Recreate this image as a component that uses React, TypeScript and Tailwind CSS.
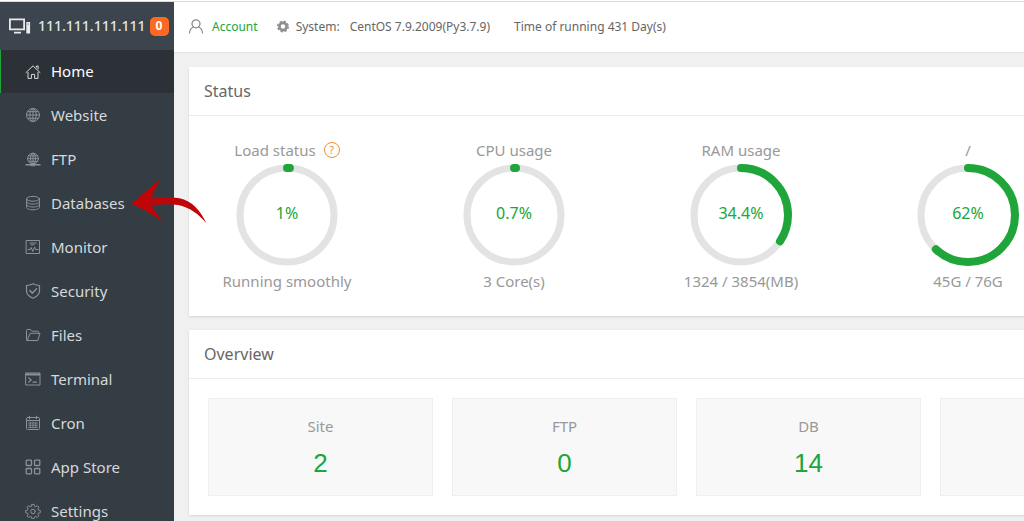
import type { ReactNode } from "react";

type NavItem = { label: string; icon: ReactNode; active?: boolean };

function Glyph({ children }: { children: ReactNode }) {
  return (
    <svg
      viewBox="0 0 16 16"
      className="size-4 shrink-0"
      fill="none"
      stroke="currentColor"
      strokeWidth="1"
      strokeLinecap="round"
      strokeLinejoin="round"
      aria-hidden="true"
    >
      {children}
    </svg>
  );
}

const navItems: NavItem[] = [
  {
    label: "Home",
    active: true,
    icon: (
      <Glyph>
        <path d="M1 8.6 8 1.8l7 6.8M11.5 3.2V2h1.6v2.9M3 8.4v6h3.4v-4h3.2v4H13v-6" />
      </Glyph>
    ),
  },
  {
    label: "Website",
    icon: (
      <Glyph>
        <circle cx="8" cy="8" r="6.5" />
        <ellipse cx="8" cy="8" rx="3.2" ry="6.5" />
        <path d="M8 1.5v13M1.5 8h13M2.6 4.7h10.8M2.6 11.3h10.8" />
      </Glyph>
    ),
  },
  {
    label: "FTP",
    icon: (
      <Glyph>
        <circle cx="8" cy="7.6" r="5.4" />
        <ellipse cx="8" cy="7.6" rx="2.5" ry="5.4" />
        <path d="M8 2.2V13M2.6 7.6h10.8M3.4 4.9h9.2M3.4 10.3h9.2" />
        <path strokeWidth="1.4" d="M1 13.8h14" />
        <path d="M6.500 12.800h3v2h-3z" />
      </Glyph>
    ),
  },
  {
    label: "Databases",
    icon: (
      <Glyph>
        <ellipse cx="8" cy="3.8" rx="6.4" ry="2.4" />
        <path d="M1.6 3.8v8.6c0 1.3 2.9 2.4 6.4 2.4s6.4-1.1 6.4-2.4V3.8M1.6 6.7C1.6 8 4.5 9.1 8 9.1s6.4-1.1 6.4-2.4M1.6 9.6c0 1.3 2.9 2.4 6.4 2.4s6.4-1.1 6.4-2.4" />
      </Glyph>
    ),
  },
  {
    label: "Monitor",
    icon: (
      <Glyph>
        <rect x="1.5" y="1.5" width="13" height="13" />
        <path d="M5 4h6M6 5.8h3M3 10.5h2l1.2-2 1.6 4 1.800-4.500 1.200 2.500H13" />
      </Glyph>
    ),
  },
  {
    label: "Security",
    icon: (
      <Glyph>
        <path
          strokeWidth="1.2"
          d="M8 .8c2 1.2 4.2 1.7 6.5 1.7v5.300c0 3.500-2.700 6-6.500 7.400-3.800-1.400-6.500-3.900-6.500-7.400V2.500C3.800 2.500 6 2 8 .8Z"
        />
        <path strokeWidth="1.5" d="m4.8 7.500 2.600 2.600 4.200-4.300" />
      </Glyph>
    ),
  },
  {
    label: "Files",
    icon: (
      <Glyph>
        <path d="M2.500 13.500c-.6 0-1-.4-1-1v-9c0-.6.4-1 1-1h3l1.300 1.700h5.700c.6 0 1 .4 1 1v1M2.200 13.500h10.600l2.200-7.200H5L2.200 13.500Z" />
      </Glyph>
    ),
  },
  {
    label: "Terminal",
    icon: (
      <Glyph>
        <rect x="1" y="2" width="14" height="12" />
        <path strokeWidth="2" strokeLinecap="butt" d="M1 3.500h14" />
        <path strokeWidth="1.2" d="m3.800 7 2.400 2-2.400 2M8 11.200h3.500" />
      </Glyph>
    ),
  },
  {
    label: "Cron",
    icon: (
      <Glyph>
        <rect x="1.500" y="2.500" width="13" height="12" rx="1" />
        <path d="M1.500 5.500h13M4.500 1.200v2.600M11.500 1.200v2.600" />
        <path strokeWidth=".8" d="M3.500 8h9M3.500 10.200h9M3.500 12.400h9M5.200 7v6M8 7v6M10.800 7v6" />
      </Glyph>
    ),
  },
  {
    label: "App Store",
    icon: (
      <Glyph>
        <g strokeWidth="1.300">
          <rect x="1.200" y="1.200" width="5.300" height="5.300" rx=".8" />
          <rect x="9.500" y="1.200" width="5.300" height="5.300" rx=".8" />
          <rect x="1.200" y="9.500" width="5.300" height="5.300" rx=".8" />
          <rect x="9.500" y="9.500" width="5.300" height="5.300" rx=".8" />
        </g>
      </Glyph>
    ),
  },
  {
    label: "Settings",
    icon: (
      <Glyph>
        <path d="m6.900 1.400 2.200 0 .4 1.900 1.200.5 1.700-1.100 1.500 1.500-1 1.700.5 1.200 1.900.4v2.200l-1.900.4-.5 1.200 1 1.600-1.500 1.500-1.700-1-1.200.5-.4 1.800H6.900l-.4-1.800-1.200-.5-1.700 1-1.500-1.500 1-1.600-.5-1.200-1.900-.4V7.500l1.900-.4.5-1.200-1-1.700 1.500-1.500 1.700 1.100 1.200-.5Z" />
        <circle cx="8" cy="8.500" r="2.300" />
      </Glyph>
    ),
  },
];

const gauges = [
  { title: "Load status", value: 1, text: "1%", note: "Running smoothly", help: true },
  { title: "CPU usage", value: 0.7, text: "0.7%", note: "3 Core(s)" },
  { title: "RAM usage", value: 34.4, text: "34.4%", note: "1324 / 3854(MB)" },
  { title: "/", value: 62, text: "62%", note: "45G / 76G" },
];

const totals = [
  { label: "Site", value: "2" },
  { label: "FTP", value: "0" },
  { label: "DB", value: "14" },
  { label: "", value: "" },
];

function Sidebar() {
  return (
    <aside className="w-[174px] shrink-0 bg-[#353d44] text-[#d5d9dc]">
      <div className="flex h-12 items-center bg-[#3c444d] pl-2">
        <svg viewBox="0 0 24 18" className="h-[18px] w-6 shrink-0" aria-hidden="true">
          <path fill="none" stroke="#e8eaec" strokeWidth="1.800" d="M1.900 2.400h14.200v10H1.900z" />
          <path fill="#e8eaec" d="M6 14.800h7v1.600H6zM18.300 5h3.800v11.400h-3.800z" />
          <path stroke="#6b737b" strokeWidth=".9" d="M19.500 7.100h1.500" />
        </svg>
        <span className="ml-1.5 text-sm font-medium text-[#e4e6e8]">111.111.111.111</span>
        <span className="ml-1 flex h-[19px] w-[19px] items-center justify-center rounded-[5px] bg-[#fb6a25] text-xs font-bold text-white">
          0
        </span>
      </div>
      <nav aria-label="Main">
        <ul>
          {navItems.map((item) => (
            <li key={item.label}>
              <a
                href="#"
                aria-current={item.active ? "page" : undefined}
                className={
                  item.active
                    ? "flex h-[43px] items-center gap-2.5 border-l border-[#20a53a] bg-[#2c3138] pl-6 text-[15px] text-white"
                    : "flex h-11 items-center gap-2.5 border-l border-transparent pl-6 text-[15px]"
                }
              >
                <span className={item.active ? "text-[#d5d9dc]" : "text-[#8b9299]"}>{item.icon}</span>
                {item.label}
              </a>
            </li>
          ))}
        </ul>
      </nav>
    </aside>
  );
}

function TopBar() {
  return (
    <header className="flex h-[51px] items-center border-b border-[#e2e2e2] bg-white pl-3.5 text-xs whitespace-nowrap text-[#666]">
      <svg
        viewBox="0 0 16 16"
        className="size-4"
        fill="none"
        stroke="#8a8a8a"
        strokeWidth="1.200"
        strokeLinecap="round"
        aria-hidden="true"
      >
        <circle cx="8" cy="4.800" r="4" />
        <path d="M1.500 14c.3-3.300 1.800-5.300 4-6M14.500 14c-.3-3.300-1.800-5.300-4-6" />
      </svg>
      <a href="#" className="ml-2 text-[#20a53a]">
        Account
      </a>
      <svg viewBox="0 0 14 14" className="ml-[18px] size-3.5" aria-hidden="true">
        <circle cx="7" cy="6.500" r="3.600" fill="none" stroke="#8e8e8e" strokeWidth="2.600" />
        <circle
          cx="7"
          cy="6.500"
          r="5.300"
          fill="none"
          stroke="#8e8e8e"
          strokeWidth="1.400"
          strokeDasharray="2.300 1.860"
        />
      </svg>
      <span className="ml-1.5">System:</span>
      <span className="ml-2.5">CentOS 7.9.2009(Py3.7.9)</span>
      <span className="ml-6">Time of running 431 Day(s)</span>
    </header>
  );
}

function Ring({ value }: { value: number }) {
  return (
    <svg viewBox="0 0 102 102" className="size-full" fill="none" aria-hidden="true">
      <circle cx="51" cy="51" r="47" stroke="#e3e3e3" strokeWidth="7" />
      <circle
        cx="51"
        cy="51"
        r="47"
        stroke="#20a53a"
        strokeWidth="8"
        strokeLinecap="round"
        pathLength="100"
        strokeDasharray={`${value} 100`}
        transform="rotate(-90 51 51)"
      />
    </svg>
  );
}

function Panel({ title, children }: { title: string; children: ReactNode }) {
  return (
    <section className="bg-white shadow-[0_1px_2px_rgba(0,0,0,0.12)]">
      <h2 className="flex h-[49px] items-center border-b border-[#ebebeb] pl-[15px] text-base text-[#666]">{title}</h2>
      {children}
    </section>
  );
}

export default function App() {
  return (
    <div className="relative flex h-screen overflow-hidden border-t border-white bg-[#f0f0f0] font-['Noto_Sans',sans-serif]">
      <div className="flex min-w-0 flex-1 border-t border-[#d9dbdc]">
        <Sidebar />
        <main className="min-w-0 flex-1">
          <TopBar />
          <div className="flex flex-col gap-3.5 pt-3.5 pl-[15px]">
            <Panel title="Status">
              <ul className="flex gap-[57px] overflow-hidden py-6 pl-[13px] text-[15px] text-[#999]">
                {gauges.map((g) => (
                  <li key={g.title} className="flex w-[170px] shrink-0 flex-col items-center">
                    <h3 className="flex h-5 items-center gap-2">
                      {g.title}
                      {g.help && (
                        <a
                          href="#"
                          aria-label="About load status"
                          className="flex size-4 items-center justify-center rounded-full border border-[#ee8f2e] text-[11px] text-[#ee8f2e]"
                        >
                          ?
                        </a>
                      )}
                    </h3>
                    <div className="mt-1 grid size-[102px] place-items-center">
                      <div className="col-start-1 row-start-1 size-full">
                        <Ring value={g.value} />
                      </div>
                      <span className="col-start-1 row-start-1 pb-1 text-base text-[#20a53a]">{g.text}</span>
                    </div>
                    <p className="mt-1 leading-[22px]">{g.note}</p>
                  </li>
                ))}
              </ul>
            </Panel>
            <Panel title="Overview">
              <ul className="flex gap-[19px] overflow-hidden py-[19px] pl-[19px]">
                {totals.map((t, i) => (
                  <li
                    key={i}
                    className="flex h-[98px] w-[225px] shrink-0 flex-col items-center border border-[#efefef] bg-[#f8f8f8] pt-4"
                  >
                    <span className="text-[15px] leading-[22px] text-[#999]">{t.label}</span>
                    <a
                      href="#"
                      className="mt-2 font-['Liberation_Sans',sans-serif] text-[26px] leading-9 text-[#20a53a]"
                    >
                      {t.value}
                    </a>
                  </li>
                ))}
              </ul>
            </Panel>
          </div>
        </main>
      </div>
      <svg
        viewBox="0 0 80 48"
        className="pointer-events-none absolute top-[176px] left-[129px] h-12 w-20"
        aria-hidden="true"
      >
        <path
          fill="#c00508"
          d="M2 27 32 1.500C29 7 25 13 22.500 21.500c9-1.500 19-2 28-.2C63 24 71 33 77.500 46.500 70 37 60 30 49 28c-8-1.300-16-.8-26.500 0 2.500 6 7.500 12 13 18C26 39 14 31 2 27Z"
        />
      </svg>
    </div>
  );
}
